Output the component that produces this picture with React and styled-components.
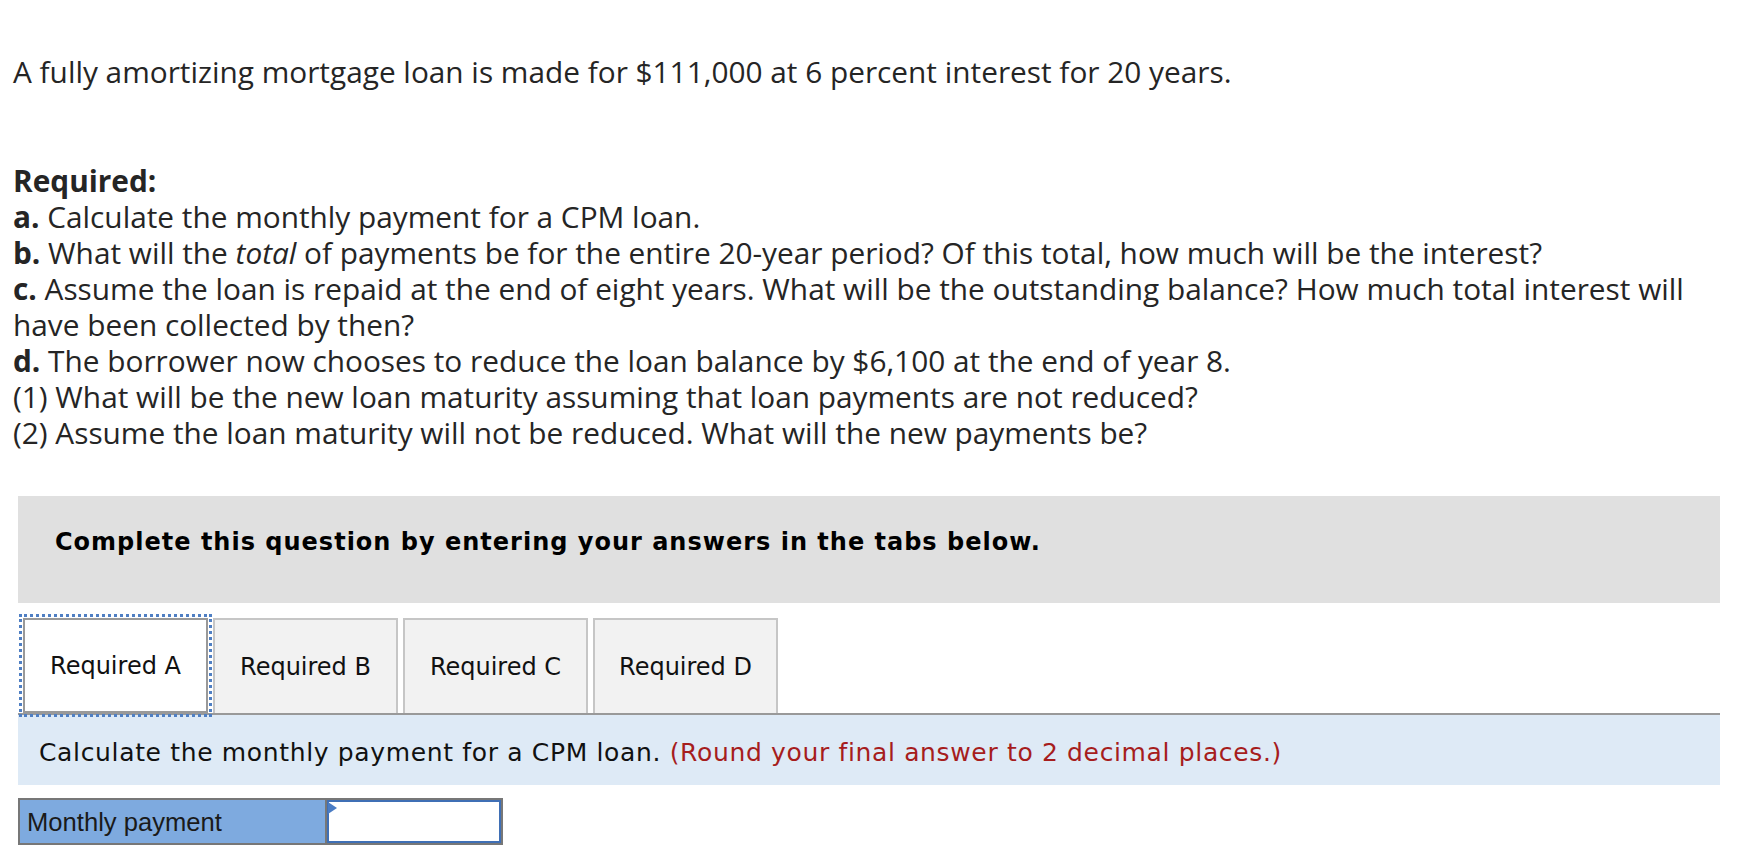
import React, { useState } from 'react';
import styled, { createGlobalStyle } from 'styled-components';

const GlobalStyle = createGlobalStyle`
  body {
    margin: 0;
    background: #fff;
  }
`;

const Page = styled.div`
  padding-top: 54px;
  width: 1749px;
`;

const Question = styled.div`
  padding-left: 13px;
  font-family: 'Open Sans', 'Liberation Sans', sans-serif;
  font-size: 29.8px;
  line-height: 36px;
  color: #252525;
  white-space: nowrap;
`;

const Intro = styled.p`
  margin: 0 0 73px;
`;

const Required = styled.div`
  margin-bottom: 45px;
`;

const Line = styled.div``;

const Instruction = styled.div`
  margin-left: 18px;
  width: 1702px;
  height: 107px;
  box-sizing: border-box;
  padding: 32px 0 0 37px;
  background: #e0e0e0;
  font-family: 'DejaVu Sans', Verdana, sans-serif;
  font-weight: 700;
  font-size: 24px;
  letter-spacing: 1px;
  line-height: 28px;
  color: #000;
`;

const TabBar = styled.div`
  margin: 15px 0 0 18px;
  width: 1702px;
  box-sizing: border-box;
  padding-left: 5px;
  display: flex;
  gap: 5px;
  align-items: flex-end;
  border-bottom: 2px solid #999;
`;

const Tab = styled.button`
  width: 185px;
  height: 95px;
  box-sizing: border-box;
  display: flex;
  align-items: center;
  justify-content: center;
  padding: 0;
  font-family: 'DejaVu Sans', Verdana, sans-serif;
  font-size: 24px;
  color: #111;
  cursor: pointer;
  background: ${(p) => (p.$active ? '#fff' : '#f2f2f2')};
  border: 2px solid ${(p) => (p.$active ? '#999' : '#c6c6c6')};
  border-bottom: ${(p) => (p.$active ? '2px solid #999' : 'none')};
  outline: ${(p) => (p.$active ? '3px dotted #4f7fc3' : 'none')};
  outline-offset: 1px;
`;

const Panel = styled.div`
  margin-left: 18px;
  width: 1702px;
  box-sizing: border-box;
  padding: 24px 0 18px 21px;
  background: #deeaf6;
  font-family: 'DejaVu Sans', Verdana, sans-serif;
  font-size: 25px;
  letter-spacing: 0.65px;
  line-height: 28px;
  color: #111;
`;

const Note = styled.span`
  color: #a61d1d;
`;

const AnswerRow = styled.div`
  margin: 13px 0 0 18px;
  width: 485px;
  height: 47px;
  box-sizing: border-box;
  display: flex;
  border: 2px solid #777;
`;

const Label = styled.div`
  flex: none;
  width: 307px;
  box-sizing: border-box;
  padding-left: 7px;
  background: #7eaadf;
  border-right: 2px solid #777;
  font-family: 'Liberation Sans', Arial, sans-serif;
  font-size: 25.6px;
  line-height: 44px;
  white-space: nowrap;
  color: #1a1a1a;
`;

const InputCell = styled.div`
  position: relative;
  flex: 1;
  min-width: 0;
  display: flex;
`;

const Input = styled.input`
  flex: 1;
  min-width: 0;
  width: 100%;
  box-sizing: border-box;
  border: 2px solid #3f6fb5;
  background: #fff;
  font-family: 'Liberation Sans', Arial, sans-serif;
  font-size: 22px;
  padding: 0 6px;
  outline: none;
`;

const Marker = styled.span`
  position: absolute;
  left: 1px;
  top: 2px;
  width: 0;
  height: 0;
  border-left: 9px solid #4a7cc4;
  border-top: 6px solid transparent;
  border-bottom: 6px solid transparent;
`;

const tabs = ['Required A', 'Required B', 'Required C', 'Required D'];

const App = () => {
  const [active, setActive] = useState(0);
  const [value, setValue] = useState('');

  return (
    <Page>
      <GlobalStyle />
      <Question>
        <Intro>
          A fully amortizing mortgage loan is made for $111,000 at 6 percent interest for 20 years.
        </Intro>
        <Required>
          <Line>
            <b>Required:</b>
          </Line>
          <Line>
            <b>a.</b> Calculate the monthly payment for a CPM loan.
          </Line>
          <Line>
            <b>b.</b> What will the <i>total</i> of payments be for the entire 20-year period? Of this
            total, how much will be the interest?
          </Line>
          <Line>
            <b>c.</b> Assume the loan is repaid at the end of eight years. What will be the
            outstanding balance? How much total interest will
            <br />
            have been collected by then?
          </Line>
          <Line>
            <b>d.</b> The borrower now chooses to reduce the loan balance by $6,100 at the end of
            year 8.
          </Line>
          <Line>(1) What will be the new loan maturity assuming that loan payments are not reduced?</Line>
          <Line>(2) Assume the loan maturity will not be reduced. What will the new payments be?</Line>
        </Required>
      </Question>

      <Instruction>Complete this question by entering your answers in the tabs below.</Instruction>

      <TabBar>
        {tabs.map((t, i) => (
          <Tab key={t} $active={i === active} onClick={() => setActive(i)}>
            {t}
          </Tab>
        ))}
      </TabBar>

      <Panel>
        Calculate the monthly payment for a CPM loan.{' '}
        <Note>(Round your final answer to 2 decimal places.)</Note>
      </Panel>

      <AnswerRow>
        <Label>Monthly payment</Label>
        <InputCell>
          <Marker />
          <Input value={value} onChange={(e) => setValue(e.target.value)} />
        </InputCell>
      </AnswerRow>
    </Page>
  );
};

export default App;
